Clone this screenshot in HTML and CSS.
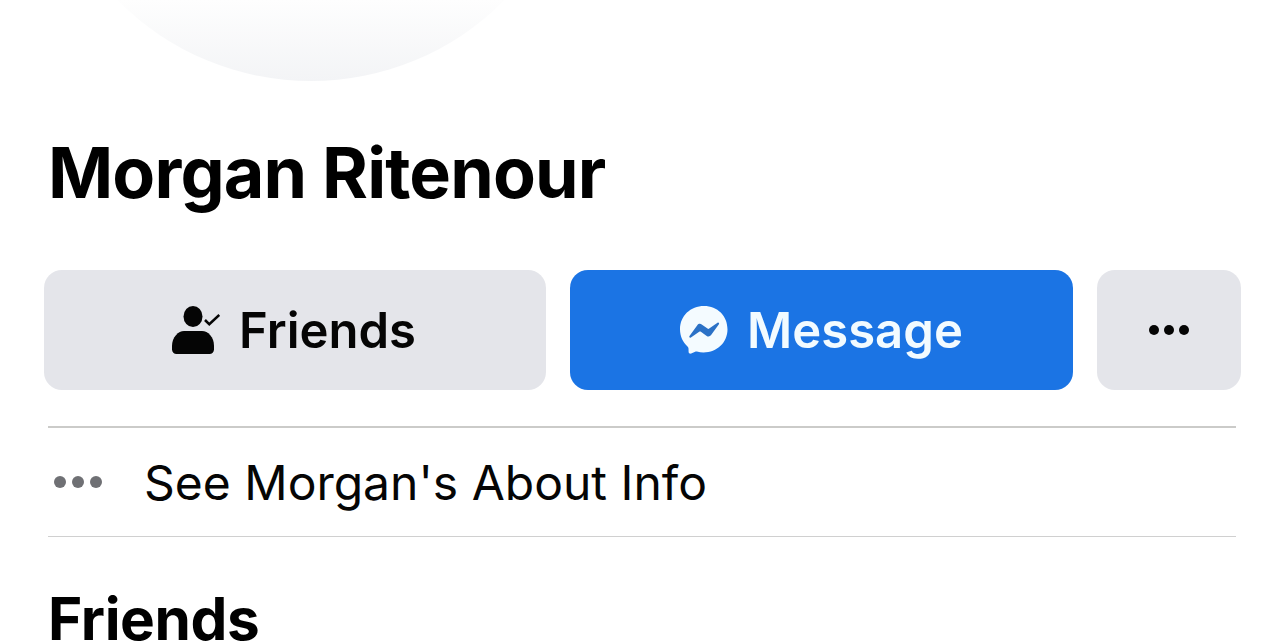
FILE: index.html
```html
<!DOCTYPE html>
<html lang="en">
<head>
<meta charset="utf-8">
<title>Morgan Ritenour</title>
<link rel="stylesheet" href="styles.css">
</head>
<body>
<main class="page">
  <div class="avatar-clip"><div class="avatar"></div></div>
  <h1 class="name">Morgan Ritenour</h1>
  <div class="actions">
    <button class="btn btn-grey btn-friends">
      <svg class="icon" viewBox="0 0 48 48" width="48" height="48" aria-hidden="true">
        <ellipse cx="21" cy="10.500" rx="9.500" ry="10.500" fill="#050505"/>
        <path d="M0 40c0-9 6.500-15 12-15h18c6 0 12 6 12 15v3.500c0 2.500-2 4.500-4.500 4.500h-33C2 48 0 46 0 43.500z" fill="#050505"/>
        <path d="M33 14l4.300 4.300 10-9.300" fill="none" stroke="#050505" stroke-width="2.600"/>
      </svg>
      <span>Friends</span>
    </button>
    <button class="btn btn-blue btn-message">
      <svg class="icon" viewBox="0 0 48 48" width="48" height="48" aria-hidden="true">
        <path d="M24 0C10.500 0 0 9.900 0 23.200c0 7 2.900 13 7.500 17.200.6.500 1 1.300 1 2.100l.1 3.500c.1 1.300 1.400 2.100 2.600 1.600l4.500-2c.4-.2.800-.2 1.200-.1 2.100.6 4.400.9 6.600.9 13.500 0 24-9.900 24-23.200S37.500 0 24 0z" fill="#f4fbff"/>
        <path d="M9.500 30l7.800-10.800c1-1.400 3-1.800 4.400-.8l5.800 4.200c.5.400 1.200.4 1.700 0l8.300-5.800c1-.7 2.100.5 1.400 1.500l-7.800 10.800c-1 1.400-3 1.800-4.400.8l-5.800-4.200c-.5-.4-1.200-.4-1.700 0l-8.300 5.800c-1 .7-2.100-.5-1.400-1.500z" fill="#2b71c6"/>
      </svg>
      <span>Message</span>
    </button>
    <button class="btn btn-grey btn-more" aria-label="More">
      <span class="dot dot-dark"></span><span class="dot dot-dark"></span><span class="dot dot-dark"></span>
    </button>
  </div>
  <div class="about-row">
    <div class="about-dots"><span class="dot dot-grey"></span><span class="dot dot-grey"></span><span class="dot dot-grey"></span></div>
    <span class="about-text">See Morgan's About Info</span>
  </div>
  <h2 class="section-title">Friends</h2>
</main>
</body>
</html>
```
FILE: styles.css
```css
html, body {
  margin: 0;
  height: 100%;
  background: #fff;
  overflow: hidden;
}
.page {
  height: 642px;
  overflow: hidden;
  font-family: Inter, "Liberation Sans", sans-serif;
  color: #050505;
}
.avatar-clip {
  height: 81px;
  overflow: hidden;
}
.avatar {
  width: 544px;
  height: 544px;
  margin: -463px 0 0 39px;
  border-radius: 50%;
  background: linear-gradient(to bottom, #fefefe 85%, #f3f4f6 100%);
}
.name {
  margin: 51px 0 0 48px;
  font-size: 70px;
  line-height: 82px;
  font-weight: 700;
  letter-spacing: -0.850px;
  color: #000;
}
.actions {
  display: flex;
  gap: 24px;
  margin: 56px 43px 0 44px;
}
.btn {
  height: 120px;
  border: 0;
  padding: 0;
  border-radius: 18px;
  display: flex;
  align-items: center;
  justify-content: center;
  font-family: inherit;
  font-size: 49px;
  font-weight: 600;
}
.btn-friends {
  flex: 0 0 502px;
  gap: 19px;
  padding-right: 2px;
  box-sizing: border-box;
}
.btn-message {
  flex: 1 1 0;
  gap: 19px;
}
.btn-grey {
  background: #e4e5ea;
  color: #050505;
}
.btn-blue {
  background: #1b74e4;
  color: #f2fbff;
}
.btn-more {
  width: 144px;
  gap: 5px;
}
.dot {
  display: block;
  border-radius: 50%;
}
.dot-dark {
  width: 10px;
  height: 10px;
  background: #050505;
}
.dot-grey {
  width: 12px;
  height: 12px;
  background: #6f7074;
}
.about-row {
  display: flex;
  align-items: center;
  height: 108px;
  margin: 36px 48px 0;
  border-top: 2px solid #cbcbc9;
  border-bottom: 1px solid #d0d0d0;
}
.about-dots {
  display: flex;
  gap: 6px;
  width: 96px;
  padding-left: 6px;
  box-sizing: border-box;
}
.about-text {
  font-size: 48px;
  font-weight: 400;
}
.section-title {
  margin: 49px 0 0 48px;
  font-size: 58.500px;
  line-height: 66px;
  font-weight: 700;
  letter-spacing: -0.400px;
  color: #000;
}
```
